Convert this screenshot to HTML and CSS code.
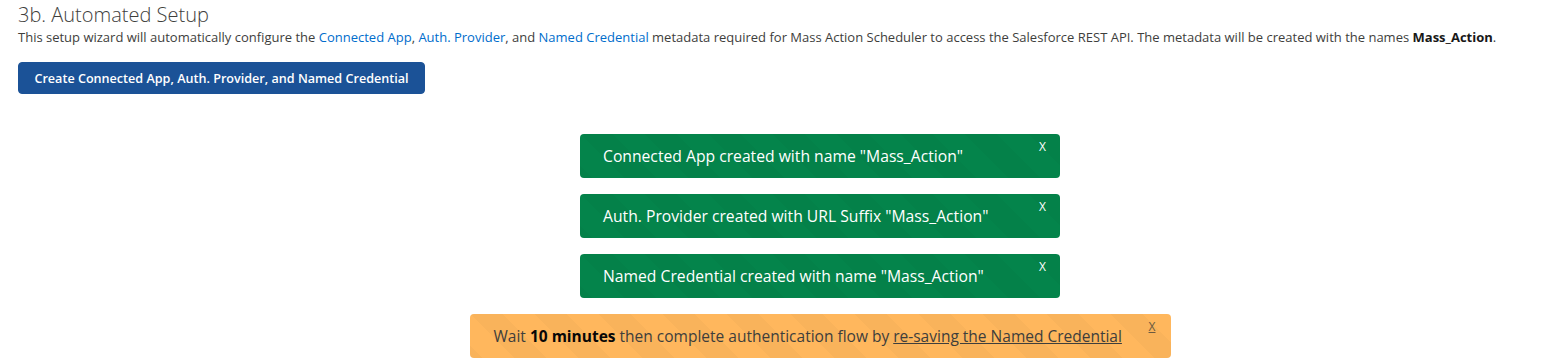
FILE: index.html
```html
<!DOCTYPE html>
<html>
<head>
<meta charset="utf-8">
<link rel="stylesheet" href="styles.css">
</head>
<body>
<div class="page">
  <h2 class="title">3b. Automated Setup</h2>
  <p class="desc">This setup wizard will automatically configure the <a href="#">Connected App</a>, <a href="#">Auth. Provider</a>, and <a href="#">Named Credential</a> metadata required for Mass Action Scheduler to access the Salesforce REST API. The metadata will be created with the names <b>Mass_Action</b>.</p>
  <button class="btn">Create Connected App, Auth. Provider, and Named Credential</button>
  <div class="toasts">
    <div class="toast success"><span class="msg">Connected App created with name "Mass_Action"</span><a class="close" href="#">X</a></div>
    <div class="toast success"><span class="msg">Auth. Provider created with URL Suffix "Mass_Action"</span><a class="close" href="#">X</a></div>
    <div class="toast success"><span class="msg">Named Credential created with name "Mass_Action"</span><a class="close" href="#">X</a></div>
    <div class="toast warning"><span class="msg">Wait <b>10 minutes</b> then complete authentication flow by <a href="#">re-saving the Named Credential</a></span><a class="close" href="#">X</a></div>
  </div>
</div>
</body>
</html>
```

FILE: styles.css
```css
html, body {
  margin: 0;
  padding: 0;
  background: #fff;
}
.page {
  font-family: "Open Sans", "Liberation Sans", sans-serif;
  color: #3e3e3c;
  padding: 2px 18px 0 18px;
}
.title {
  margin: 0;
  font-size: 20px;
  font-weight: 300;
  line-height: 26px;
  color: #3e3e3c;
}
.desc {
  margin: 0;
  font-size: 13px;
  line-height: 18px;
  white-space: nowrap;
}
.desc a {
  color: #006dcc;
  text-decoration: none;
}
.desc b {
  font-weight: 700;
  color: #181818;
}
.btn {
  display: block;
  margin-top: 16px;
  height: 32px;
  width: 407px;
  padding: 0;
  background: #1b5297;
  color: #fff;
  border: 1px solid #1b5297;
  border-radius: 4px;
  font-family: inherit;
  font-size: 12.6px;
  font-weight: 600;
  white-space: nowrap;
}
.toasts {
  margin-top: 40px;
  padding-left: 97px;
  display: flex;
  flex-direction: column;
  align-items: center;
  gap: 16px;
}
.toast {
  position: relative;
  box-sizing: border-box;
  height: 44px;
  display: flex;
  align-items: center;
  padding: 0 40px 0 23px;
  border-radius: 4px;
  font-size: 15.7px;
  background-image: linear-gradient(45deg, rgba(0,0,0,.025) 25%, transparent 25%, transparent 50%, rgba(0,0,0,.025) 50%, rgba(0,0,0,.025) 75%, transparent 75%, transparent);
  background-size: 64px 64px;
}
.success {
  width: 480px;
  background-color: #04844b;
  color: #fff;
}
.warning {
  width: 701px;
  background-color: #ffb75d;
  color: #3e3e3c;
  padding-left: 24px;
  font-size: 15.5px;
}
.warning b { font-weight: 700; color: #080707; }
.warning .msg a { color: #3e3e3c; text-decoration: underline; }
.close {
  position: absolute;
  right: 14px;
  top: 4px;
  font-size: 12px;
  text-decoration: none;
  color: #fff;
}
.warning .close {
  color: #6b5a40;
  text-decoration: underline;
  right: 15px;
}
```
